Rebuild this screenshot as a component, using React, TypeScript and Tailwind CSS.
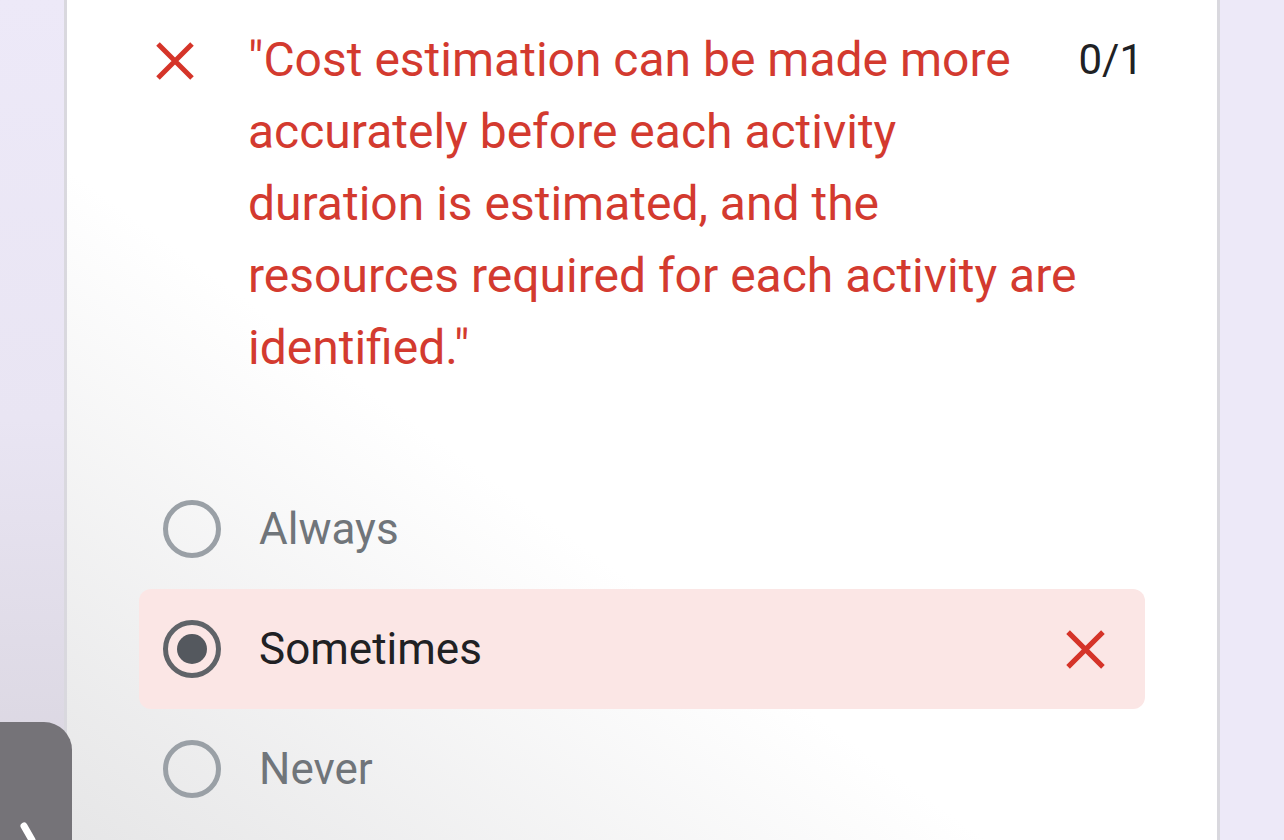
const options = [
  { label: 'Always', selected: false },
  { label: 'Sometimes', selected: true },
  { label: 'Never', selected: false },
];

function Cross({ size }: { size: number }) {
  return (
    <svg width={size} height={size} viewBox="0 0 40 40" className="shrink-0">
      <path d="M3 3 L37 37 M37 3 L3 37" stroke="#d53429" strokeWidth="5" />
    </svg>
  );
}

function Radio({ selected }: { selected: boolean }) {
  return (
    <span
      className={`flex h-[58px] w-[58px] shrink-0 items-center justify-center rounded-full border-[5px] ${
        selected ? 'border-[#5f6368]' : 'border-[#9aa0a6]'
      }`}
    >
      {selected && <span className="h-[30px] w-[30px] rounded-full bg-[#54585e]" />}
    </span>
  );
}

export default function App() {
  return (
    <main className="relative flex h-[840px] w-[1284px] overflow-hidden bg-[#ede9f8] font-['Roboto',sans-serif]">
      <div className="w-[64px] shrink-0 bg-linear-to-b from-[#ede9f8] via-[#e9e5f3] to-[#d8d4de]" />

      <section className="flex w-[1156px] shrink-0 flex-col border-x-[3px] border-[#d9d8de] bg-linear-to-tr from-[#e6e6e7] via-white via-40% to-white">
        <div className="flex pt-[24px] pl-[88px] pr-[74px]">
          <div className="mt-[17px]">
            <Cross size={40} />
          </div>
          <p className="ml-[53px] whitespace-nowrap text-[48px] leading-[72px] text-[#d33a2f]">
            "Cost estimation can be made more
            <br />
            accurately before each activity
            <br />
            duration is estimated, and the
            <br />
            resources required for each activity are
            <br />
            identified."
          </p>
          <span className="ml-auto text-[42px] leading-[72px] text-[#202124]">0/1</span>
        </div>

        <div className="mt-[85px] flex flex-col pl-[72px] pr-[72px]">
          {options.map((opt) => (
            <div
              key={opt.label}
              className={`flex h-[120px] items-center rounded-[12px] pl-[24px] pr-[39px] ${
                opt.selected ? 'bg-[#fbe6e5]' : ''
              }`}
            >
              <Radio selected={opt.selected} />
              <span
                className={`ml-[38px] text-[44px] ${opt.selected ? 'text-[#202124]' : 'text-[#70757a]'}`}
              >
                {opt.label}
              </span>
              {opt.selected && (
                <div className="ml-auto">
                  <Cross size={41} />
                </div>
              )}
            </div>
          ))}
        </div>
      </section>

      <div className="flex-1" />

      <div className="absolute left-0 top-[722px] h-[118px] w-[72px] rounded-tr-[28px] bg-[#757378]">
        <svg className="absolute left-[18px] top-[100px]" width="30" height="20" viewBox="0 0 30 20">
          <path d="M6 4 L14 18" stroke="white" strokeWidth="7" strokeLinecap="round" />
        </svg>
      </div>
    </main>
  );
}
